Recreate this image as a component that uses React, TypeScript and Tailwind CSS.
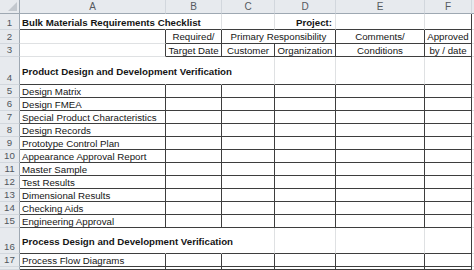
import type { ReactNode } from "react";

type Edge = "d" | "l" | "n";

const RIGHT: Record<Edge, string> = {
  d: "border-r border-r-[#3e3e3e]",
  l: "border-r border-r-[#dfe1e3]",
  n: "border-r border-r-transparent",
};

const BOTTOM: Record<Edge, string> = {
  d: "border-b border-b-[#3e3e3e]",
  l: "border-b border-b-[#dfe1e3]",
  n: "border-b border-b-transparent",
};

const JUSTIFY = {
  left: "justify-start",
  center: "justify-center",
  right: "justify-end",
};

const ITEMS = {
  top: "items-start",
  center: "items-center",
  bottom: "items-end",
};

function Cell({
  r = "d",
  b = "d",
  align = "left",
  v = "center",
  bold = false,
  wide = false,
  extra = "",
  children,
}: {
  r?: Edge;
  b?: Edge;
  align?: keyof typeof JUSTIFY;
  v?: keyof typeof ITEMS;
  bold?: boolean;
  wide?: boolean;
  extra?: string;
  children?: ReactNode;
}) {
  return (
    <div
      className={`flex min-w-0 whitespace-nowrap px-[2px] ${RIGHT[r]} ${BOTTOM[b]} ${JUSTIFY[align]} ${ITEMS[v]} ${
        bold ? "font-bold" : ""
      } ${wide ? "col-span-2" : ""} ${extra}`}
    >
      {children}
    </div>
  );
}

function RowNum({ n }: { n?: number }) {
  return (
    <div className="flex items-end justify-center overflow-hidden border-r border-r-[#9ea8b2] border-b border-b-[#d2d7dd] bg-[#e7eaee] text-[#50565c] leading-[12px]">
      {n}
    </div>
  );
}

const items = [
  "Design Matrix",
  "Design FMEA",
  "Special Product Characteristics",
  "Design Records",
  "Prototype Control Plan",
  "Appearance Approval Report",
  "Master Sample",
  "Test Results",
  "Dimensional Results",
  "Checking Aids",
  "Engineering Approval",
];

function TableRow({ n, label }: { n?: number; label?: string }) {
  return (
    <>
      <RowNum n={n} />
      <Cell>{label}</Cell>
      <Cell />
      <Cell />
      <Cell />
      <Cell />
      <Cell />
      <Cell r="l" b="l" />
    </>
  );
}

export default function App() {
  const cols = ["A", "B", "C", "D", "E", "F"];

  return (
    <div
      className="grid h-[270px] w-[474px] overflow-hidden bg-white text-[9.7px] leading-[11px] text-[#151515] grid-cols-[20px_146px_56px_53px_61px_89px_47px_2px] grid-rows-[14px_16px_14px_13px_28px_repeat(11,13px)_26px_13px_3px]"
      style={{ fontFamily: '"Liberation Sans", Arial, sans-serif' }}
    >
      {/* column headers */}
      <div className="relative border-r border-r-[#9ea8b2] border-b border-b-[#9ea8b2] bg-[#e7eaee]">
        <svg className="absolute right-[2px] bottom-[2px]" width="9" height="9" viewBox="0 0 9 9">
          <polygon points="9,0 9,9 0,9" fill="#c3c8ce" />
        </svg>
      </div>
      {cols.map((c) => (
        <div
          key={c}
          className="flex items-center justify-center border-r border-r-[#d2d7dd] border-b border-b-[#9ea8b2] bg-[#e7eaee] text-[10px] text-[#55595e]"
        >
          {c}
        </div>
      ))}
      <div className="border-b border-b-[#9ea8b2] bg-[#e7eaee]" />

      {/* row 1 */}
      <RowNum n={1} />
      <Cell r="n" bold v="bottom" extra="pb-[1px]">
        Bulk Materials Requirements Checklist
      </Cell>
      <Cell r="l" v="bottom" />
      <Cell r="l" v="bottom" />
      <Cell r="l" bold align="right" v="bottom" extra="pb-[1px] pr-[3px]">
        Project:
      </Cell>
      <Cell r="l" />
      <Cell />
      <Cell r="l" b="l" />

      {/* row 2 */}
      <RowNum n={2} />
      <Cell b="l" />
      <Cell align="center">Required/</Cell>
      <Cell align="center" wide>
        Primary Responsibility
      </Cell>
      <Cell align="center">Comments/</Cell>
      <Cell align="center">Approved</Cell>
      <Cell r="l" b="l" />

      {/* row 3 */}
      <RowNum n={3} />
      <Cell b="l" />
      <Cell align="center">Target Date</Cell>
      <Cell align="center">Customer</Cell>
      <Cell align="center">Organization</Cell>
      <Cell align="center">Conditions</Cell>
      <Cell align="center">by / date</Cell>
      <Cell r="l" b="l" />

      {/* row 4 */}
      <RowNum n={4} />
      <Cell r="n" bold extra="pt-[2px]">
        Product Design and Development Verification
      </Cell>
      <Cell r="n" />
      <Cell r="l" />
      <Cell r="l" />
      <Cell r="l" />
      <Cell r="d" />
      <Cell r="l" b="l" />

      {items.map((label, i) => (
        <TableRow key={label} n={i + 5} label={label} />
      ))}

      {/* row 16 */}
      <RowNum n={16} />
      <Cell r="n" bold extra="pt-[2px]">
        Process Design and Development Verification
      </Cell>
      <Cell r="n" />
      <Cell r="l" />
      <Cell r="l" />
      <Cell r="l" />
      <Cell r="d" />
      <Cell r="l" b="l" />

      <TableRow n={17} label="Process Flow Diagrams" />
      <TableRow />
    </div>
  );
}
